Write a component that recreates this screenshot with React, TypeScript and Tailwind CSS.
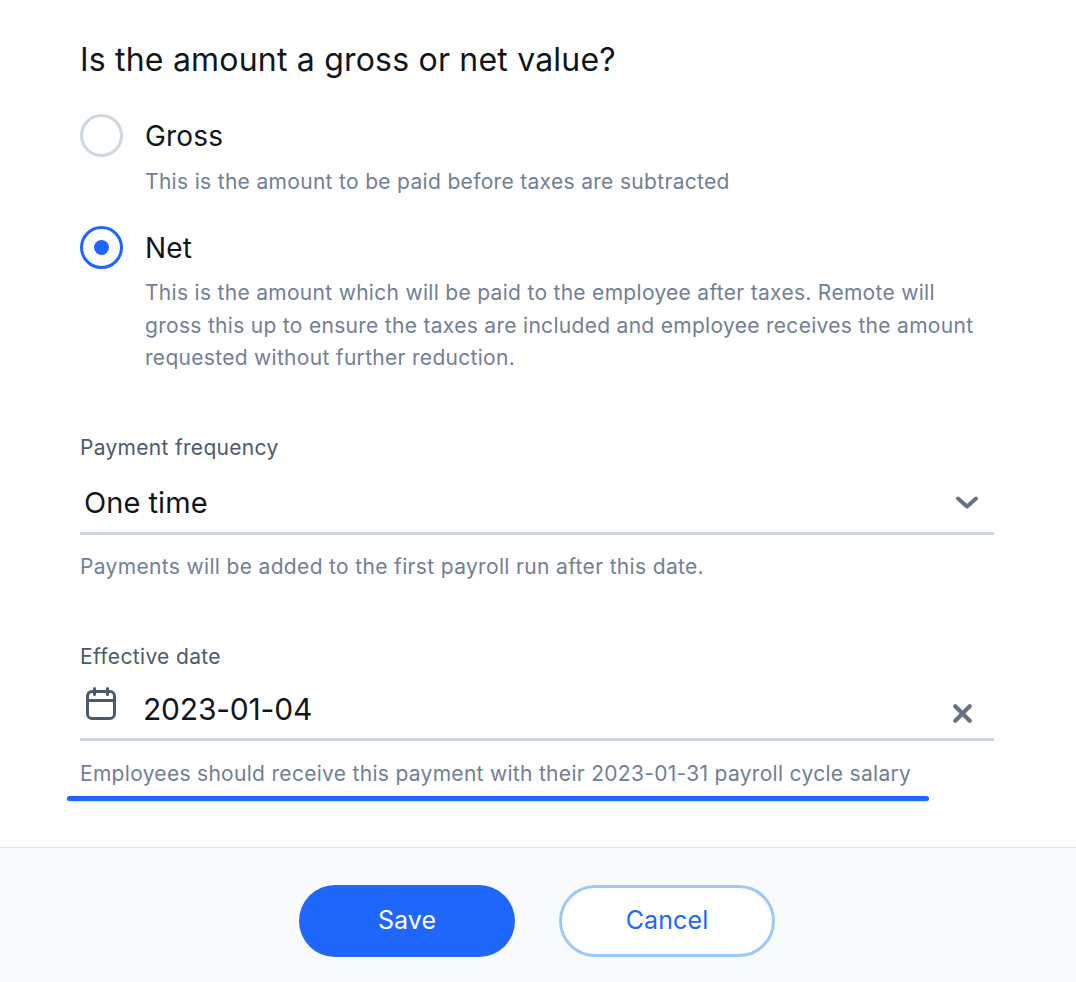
import React from "react";

function Radio({ checked }: { checked?: boolean }) {
  return (
    <span
      className={`flex h-[43px] w-[43px] shrink-0 items-center justify-center rounded-full border-[3px] bg-white ${
        checked ? "border-[#1f66fa]" : "border-[#cfd7e1]"
      }`}
    >
      {checked && <span className="h-[15px] w-[15px] rounded-full bg-[#1f66fa]" />}
    </span>
  );
}

export default function App() {
  return (
    <div className="flex h-[982px] w-[1076px] flex-col overflow-hidden bg-white font-['Inter',sans-serif] text-[#12161c]">
      <main className="flex h-[847px] flex-col pl-[80px] pr-[82px] pt-[40px]">
        <h1 className="text-[32px] leading-[40px] font-normal tracking-[0.2px]">Is the amount a gross or net value?</h1>

        <div className="mt-[34px] flex gap-[22px]">
          <Radio />
          <div>
            <div className="text-[28px] leading-[44px] tracking-[0.2px]">Gross</div>
            <p className="mt-[7px] text-[21px] leading-[33px] tracking-[0.32px] text-[#728094]">
              This is the amount to be paid before taxes are subtracted
            </p>
          </div>
        </div>

        <div className="mt-[28px] flex gap-[22px]">
          <Radio checked />
          <div>
            <div className="text-[28px] leading-[44px] tracking-[0.2px]">Net</div>
            <p className="mt-[7px] text-[21px] leading-[32.5px] tracking-[0.3px] text-[#728094]">
              This is the amount which will be paid to the employee after taxes. Remote will
              <br />
              gross this up to ensure the taxes are included and employee receives the amount
              <br />
              requested without further reduction.
            </p>
          </div>
        </div>

        <label className="mt-[58px] text-[21px] leading-[30px] tracking-[0.3px] text-[#4d5a6b]">Payment frequency</label>
        <div className="mt-[16px] flex h-[56px] items-start justify-between border-b-[3px] border-[#cfd5df] pl-[4px] pr-[14px] pt-[4px]">
          <span className="text-[29px] leading-[40px] tracking-[0.05px]">One time</span>
          <svg width="26" height="26" viewBox="0 0 26 26" fill="none" className="mt-[7px]">
            <path d="M4 8.5 13 16.5 22 8.5" stroke="#677384" strokeWidth="4" strokeLinecap="round" strokeLinejoin="round" />
          </svg>
        </div>
        <p className="mt-[15px] text-[21px] leading-[33px] tracking-[0.34px] text-[#728094]">
          Payments will be added to the first payroll run after this date.
        </p>

        <label className="mt-[59px] text-[21px] leading-[30px] tracking-[0.35px] text-[#4d5a6b]">Effective date</label>
        <div className="mt-[14px] flex h-[55px] items-start border-b-[3px] border-[#cfd5df] pl-[6px] pt-[3px]">
          <svg width="30" height="34" viewBox="0 0 30 34" fill="none" className="mt-[-2px]">
            <rect x="1.5" y="4.5" width="27" height="27" rx="4.5" stroke="#4d5a6b" strokeWidth="3" />
            <path d="M1.5 13.5H28.5" stroke="#4d5a6b" strokeWidth="3" />
            <path d="M8.5 1.5V7.5M21.5 1.5V7.5" stroke="#4d5a6b" strokeWidth="3" strokeLinecap="round" />
          </svg>
          <span className="ml-[27px] text-[30px] leading-[40px] tracking-[-0.2px]">2023-01-04</span>
          <svg width="19" height="19" viewBox="0 0 19 19" fill="none" className="ml-auto mr-[22px] mt-[15px]">
            <path d="M2.3 2.3 16.7 16.7M16.7 2.3 2.3 16.7" stroke="#677384" strokeWidth="4.2" strokeLinecap="round" />
          </svg>
        </div>
        <p className="mt-[16px] text-[21px] leading-[33px] tracking-[0.3px] text-[#728094]">
          Employees should receive this payment with their 2023-01-31 payroll cycle salary
        </p>
        <div className="ml-[-13px] mt-[6px] h-[5px] w-[862px] rounded-full bg-[#1f66fa] shadow-[0_1px_3px_rgba(0,0,0,0.15)]" />
      </main>

      <footer className="flex flex-1 justify-center gap-[44px] border-t border-[#e2e5ea] bg-[#f9fafc] pr-[2px] pt-[37px]">
        <button className="h-[72px] w-[216px] rounded-full bg-[#1f66fa] text-[25px] tracking-[0.1px] text-white">Save</button>
        <button className="h-[72px] w-[216px] rounded-full border-[3px] border-[#9ccaf6] bg-white text-[25px] tracking-[0.1px] text-[#1f66fa]">
          Cancel
        </button>
      </footer>
    </div>
  );
}
